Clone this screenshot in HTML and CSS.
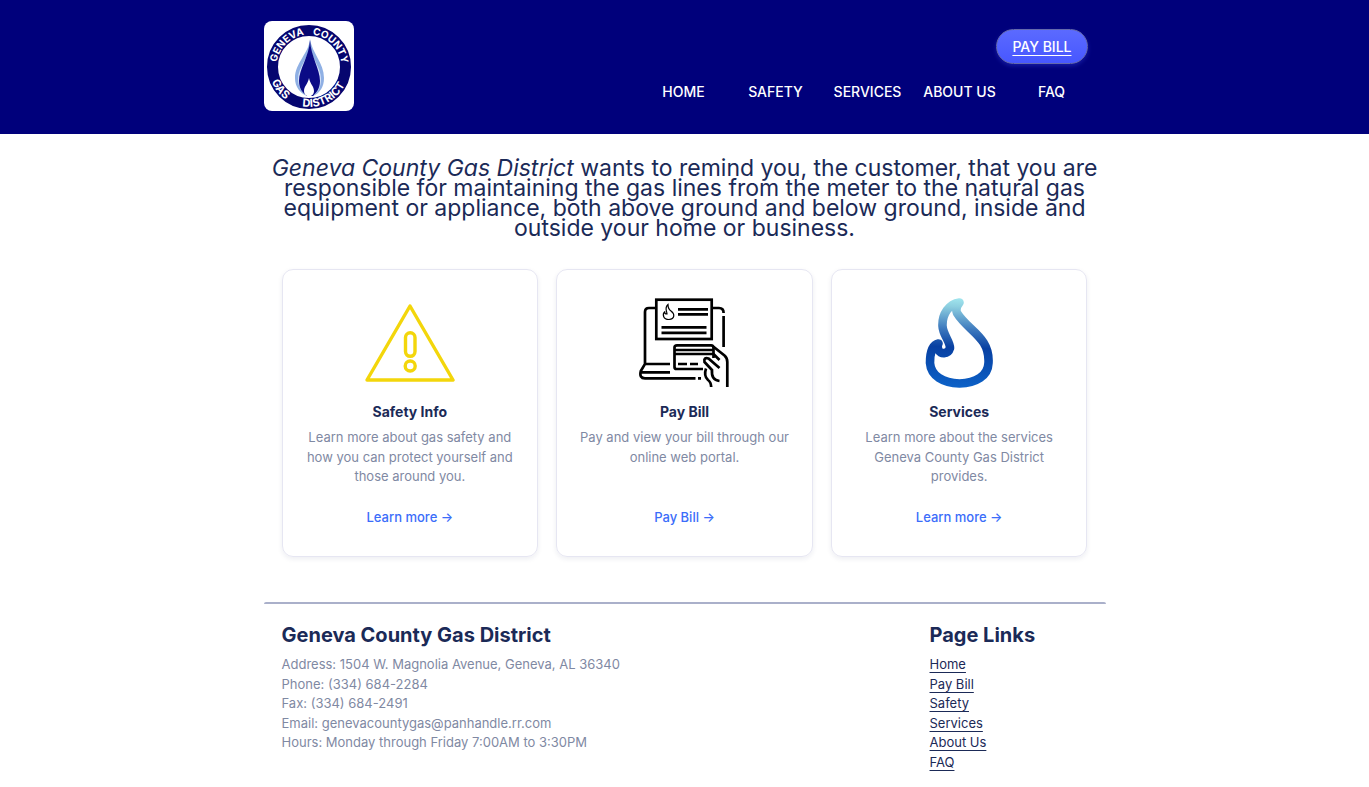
FILE: index.html
```html
<!DOCTYPE html>
<html lang="en">
<head>
  <meta charset="UTF-8">
  <meta name="viewport" content="width=device-width, initial-scale=1.0">
  <title>Geneva County Gas District</title>
  <link rel="stylesheet" href="styles.css">
</head>
<body>

  <!-- Header -->
  <header class="site-header">
    <div class="container header-inner">
      <a class="logo" href="#" aria-label="Geneva County Gas District">
        <svg viewBox="0 0 90 90" width="90" height="90">
          <defs>
            <path id="arc-top" d="M12.500 46 A32.500 32.500 0 0 1 77.500 46"/>
            <path id="arc-bottom" d="M5 46 A40 40 0 0 0 85 46"/>
          </defs>
          <circle cx="45" cy="46" r="36.500" fill="none" stroke="#06066f" stroke-width="11"/>
          <text class="logo-text"><textPath href="#arc-top" startOffset="25%" text-anchor="middle">GENEVA</textPath></text>
          <text class="logo-text"><textPath href="#arc-top" startOffset="75%" text-anchor="middle">COUNTY</textPath></text>
          <text class="logo-text logo-text-bottom"><textPath href="#arc-bottom" startOffset="21%" text-anchor="middle">GAS</textPath></text>
          <text class="logo-text logo-text-bottom"><textPath href="#arc-bottom" startOffset="65%" text-anchor="middle">DISTRICT</textPath></text>
          <path d="M46 18 C45 32 31 42 31 57 C31 66 36 72 43 75 H49 C56 72 60 66 60 57 C60 42 48 32 46 18Z" fill="#8fb0e4"/>
          <path d="M46 24 C45 37 34 46 34 58 C34 66 38 71 42 74 H50 C54 71 57 66 57 58 C57 46 47 37 46 24Z" fill="#d5e2f8"/>
          <path d="M46 19 C45 36 35 48 35 60 C35 68 39 72 43 75 H49 C52 72 56 68 56 60 C56 48 47 36 46 19Z" fill="#0b0b86"/>
          <path d="M45 57 C44 63 40 65 40 70 C40 77 50 77 50 70 C50 65 46 63 45 57Z" fill="#fff"/>
        </svg>
      </a>
      <div class="header-right">
        <a class="pay-button" href="#">PAY BILL</a>
        <nav class="main-nav">
          <a href="#">HOME</a>
          <a href="#">SAFETY</a>
          <a href="#">SERVICES</a>
          <a href="#">ABOUT US</a>
          <a href="#">FAQ</a>
        </nav>
      </div>
    </div>
  </header>

  <main class="container">
    <p class="intro"><em>Geneva County Gas District</em> wants to remind you, the customer, that you are responsible for maintaining the gas lines from the meter to the natural gas equipment or appliance, both above ground and below ground, inside and outside your home or business.</p>

    <!-- Cards -->
    <section class="cards">
      <article class="card">
        <svg class="card-icon" viewBox="0 0 90 90" width="90" height="90" fill="none" stroke="#f3d60b" stroke-width="3.400">
          <path d="M45 8 L88 82 H2 Z" stroke-linejoin="round"/>
          <rect x="40.500" y="34.800" width="9.500" height="23.500" rx="4.700"/>
          <circle cx="45.200" cy="68" r="5"/>
        </svg>
        <h2>Safety Info</h2>
        <p>Learn more about gas safety and how you can protect yourself and those around you.</p>
        <a href="#">Learn more →</a>
      </article>

      <article class="card">
        <svg class="card-icon" viewBox="0 0 90 90" width="90" height="90" fill="none" stroke="#000" stroke-width="2.700">
          <path d="M16 10 H10 Q6 10 6 14 V66 L1.800 73 Q0 80.300 6 80.300 H56.500 M59 80.300 H62 M6 66 H31 M2 74.300 H31"/>
          <path d="M74 10 H80 Q84.600 10 84.600 15 M84.600 18 V49"/>
          <rect x="17.300" y="1.700" width="55.400" height="39.300"/>
          <path d="M39 11.300 H69 M39 16.300 H69 M22.500 29.300 H67.500 M22.500 34.800 H67.500"/>
          <path d="M29 6.500 C25 10 28 13 28 16 Q25 16 26 13.500 C23 16 24 21.500 30 21.500 C36 21 36 16 32 13 Q29 11 29 6.500Z" stroke-width="1.200"/>
          <path d="M64 71 H37.500 Q35.500 71 35.500 69 V49.500 Q35.500 47.300 38 47.300 H72 Q74.500 47.300 74.500 50 V60 M35.500 52 H74 M35.500 56 H74 M39 66 H48 M51 66 H59"/>
          <path d="M74.500 48.700 L85.500 57.500 Q88.300 60 88.300 64 V89 M74.500 56 L80.500 62"/>
          <path d="M80.500 70 L69.500 60.500 Q64.500 59 65.500 64 L73 72 Q72 82 80.500 83 M67 70.500 Q64.500 78 69 82 Q72 84 72.200 89"/>
        </svg>
        <h2>Pay Bill</h2>
        <p>Pay and view your bill through our online web portal.</p>
        <a href="#">Pay Bill →</a>
      </article>

      <article class="card">
        <svg class="card-icon" viewBox="0 0 90 90" width="90" height="90" fill="none">
          <defs>
            <linearGradient id="flame" gradientUnits="userSpaceOnUse" x1="50" y1="0" x2="46" y2="90">
              <stop offset="0" stop-color="#a2e7ef"/>
              <stop offset="0.100" stop-color="#8dcfe0"/>
              <stop offset="0.350" stop-color="#3c78bd"/>
              <stop offset="0.550" stop-color="#0840a2"/>
              <stop offset="1" stop-color="#0c62c8"/>
            </linearGradient>
          </defs>
          <path d="M45.500 4.500 C35 6 28 16 28.500 28 C29 37 36 43 36 50 C34 57 26 56 24.500 52 Q23 48 24.500 45.500 C18 47 16 54 16 65 C17 78 29 85 45.500 85.500 C62 85 74 78 74.500 65 C76 39 54 33 43 15 Q41 10 45.500 4.500" stroke="url(#flame)" stroke-width="8.600" stroke-linejoin="round" stroke-linecap="round"/>
        </svg>
        <h2>Services</h2>
        <p>Learn more about the services Geneva County Gas District provides.</p>
        <a href="#">Learn more →</a>
      </article>
    </section>
  </main>

  <!-- Footer -->
  <footer class="container footer">
    <div class="contact">
      <h3>Geneva County Gas District</h3>
      <p>Address: 1504 W. Magnolia Avenue, Geneva, AL 36340</p>
      <p>Phone: (334) 684-2284</p>
      <p>Fax: (334) 684-2491</p>
      <p>Email: genevacountygas@panhandle.rr.com</p>
      <p>Hours: Monday through Friday 7:00AM to 3:30PM</p>
    </div>
    <div class="page-links">
      <h3>Page Links</h3>
      <ul>
        <li><a href="#">Home</a></li>
        <li><a href="#">Pay Bill</a></li>
        <li><a href="#">Safety</a></li>
        <li><a href="#">Services</a></li>
        <li><a href="#">About Us</a></li>
        <li><a href="#">FAQ</a></li>
      </ul>
    </div>
  </footer>

</body>
</html>
```
FILE: styles.css
```css
/* Global Styles */
* {
  box-sizing: border-box;
}

body {
  font-family: Inter, "Liberation Sans", sans-serif;
  font-size: 13px;
  line-height: 1.5;
  color: #1b2a57;
  background-color: #fff;
  margin: 0;
}

h2,
h3,
p,
ul {
  margin: 0;
  padding: 0;
}

.container {
  max-width: 842px;
  margin: 0 auto;
}

/* Header */
.site-header {
  background-color: #00007b;
}

.header-inner {
  display: flex;
  justify-content: space-between;
  padding: 21px 0 23px;
}

.logo {
  display: block;
  width: 90px;
  height: 90px;
  background-color: #fff;
  border-radius: 8px;
}

.logo svg {
  display: block;
}

.logo-text {
  font-size: 10px;
  font-weight: 700;
  fill: #fff;
}

.logo-text-bottom {
  font-size: 11px;
}

.header-right {
  display: flex;
  flex-direction: column;
  align-items: flex-end;
  padding: 8px 8px 0 0;
}

.pay-button {
  margin-right: 10px;
  padding: 6px 15px;
  border: 1px solid #6469ac;
  border-radius: 18px;
  background: linear-gradient(#5b6aff, #4757ff);
  box-shadow: 0 2px 4px rgba(71, 87, 255, 0.3);
  color: #fff;
  font-size: 14px;
  font-weight: 500;
  text-underline-offset: 3px;
}

.main-nav {
  display: grid;
  grid-template-columns: repeat(5, 92px);
  margin-top: 17px;
  text-align: center;
}

.main-nav a {
  color: #fff;
  font-size: 14px;
  font-weight: 500;
  text-decoration: none;
}

/* Intro */
.intro {
  padding-top: 24px;
  font-size: 23px;
  line-height: 20px;
  text-align: center;
}

/* Cards */
.cards {
  display: grid;
  grid-template-columns: repeat(3, 1fr);
  gap: 18px;
  padding: 31px 18px 45px;
}

.card {
  display: flex;
  flex-direction: column;
  align-items: center;
  padding: 28px 18px;
  border: 1px solid #e6e6f2;
  border-radius: 11px;
  box-shadow: 0 2px 5px rgba(27, 42, 87, 0.08);
  text-align: center;
}

.card h2 {
  margin: 13px 0 6px;
  font-size: 14px;
  font-weight: 700;
}

.card p {
  flex: 1;
  color: #7f89a3;
}

.card a {
  margin: 21px 0 1px;
  color: #3b6dfa;
  font-weight: 500;
  text-decoration: none;
}

/* Footer */
.footer {
  display: flex;
  justify-content: space-between;
  padding: 16px 18px 8px;
  border-top: 2px solid #aab0ca;
  border-radius: 2px;
}

.footer h3 {
  margin-bottom: 5px;
  font-size: 20px;
  font-weight: 700;
}

.contact {
  color: #7f89a3;
}

.contact h3 {
  color: #1b2a57;
}

.page-links {
  width: 158px;
}

.page-links ul {
  list-style: none;
}

.page-links a {
  color: #1b2a57;
  text-underline-offset: 3px;
}
```
